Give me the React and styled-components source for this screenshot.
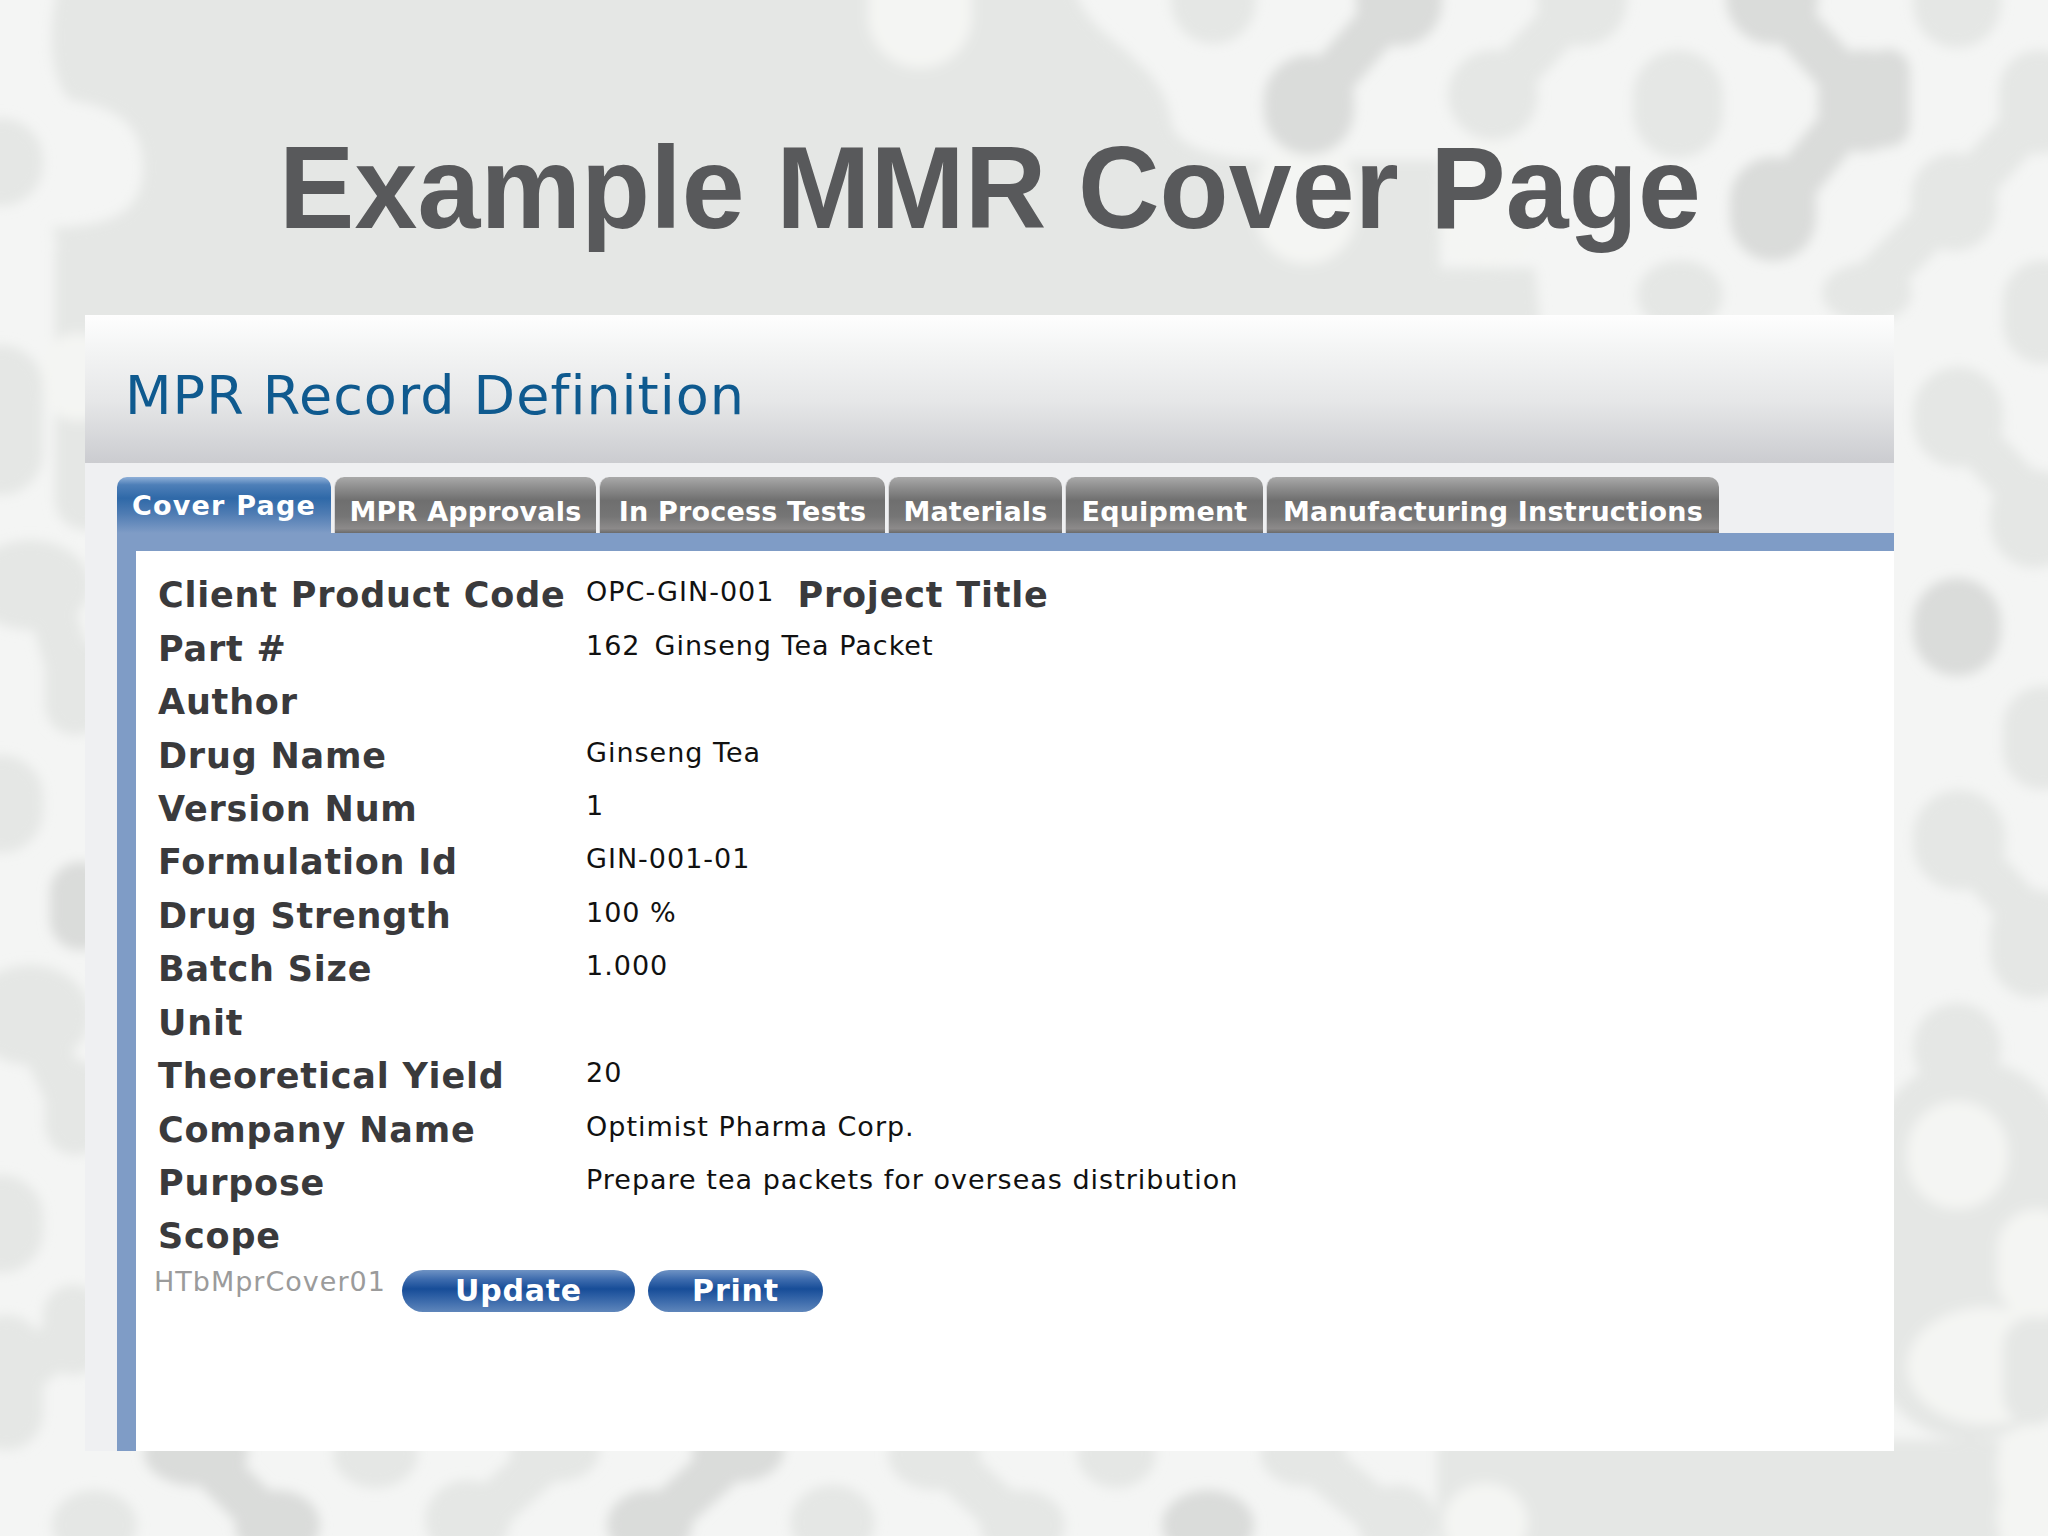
import React from 'react';
import styled, { createGlobalStyle } from 'styled-components';

const Global = createGlobalStyle`
  html, body { margin: 0; padding: 0; background: #f4f5f4; }
`;

const Page = styled.div`
  position: relative;
  width: 2048px;
  height: 1536px;
  overflow: hidden;
  background: #f4f5f4;
`;
const Backdrop = styled.svg`
  position: absolute;
  inset: 0;
  width: 2048px;
  height: 1536px;
`;
const Slide = styled.div`
  position: relative;
  display: flex;
  flex-direction: column;
  width: 1809px;
  height: 1451px;
  margin-left: 85px;
`;
const TitleBar = styled.div`
  height: 315px;
  flex: none;
  box-sizing: border-box;
  padding: 131px 0 0 194px;
`;
const Title = styled.h1`
  margin: 0;
  font: bold 113px/1 'Liberation Sans', Arial, sans-serif;
  letter-spacing: 0.12px;
  color: #58595b;
  white-space: nowrap;
  transform: scaleY(1.04);
`;
const Panel = styled.div`
  flex: 1;
  display: flex;
  flex-direction: column;
  background: #eff0f2;
`;
const PanelHeader = styled.div`
  height: 148px;
  flex: none;
  box-sizing: border-box;
  padding: 49px 0 0 40px;
  background: linear-gradient(#fefefe 0%, #f4f5f5 22%, #e6e7e8 58%, #cbccd0 100%);
`;
const PanelTitle = styled.h2`
  margin: 0;
  font: 400 54px/1.2 'DejaVu Sans', Verdana, sans-serif;
  letter-spacing: 1px;
  color: #0f5a8f;
  white-space: nowrap;
`;
const TabArea = styled.div`
  flex: 1;
  display: flex;
  flex-direction: column;
  padding: 14px 0 0 32px;
  min-height: 0;
`;
const TabRow = styled.div`
  display: flex;
  gap: 3px;
  height: 56px;
  flex: none;
`;
const Tab = styled.div`
  box-sizing: border-box;
  width: ${p => p.$w}px;
  border-radius: 10px 10px 0 0;
  border-left: ${p => (p.$active ? 'none' : '1px solid #d6d6d8')};
  color: #fff;
  font: bold 27px/1 'DejaVu Sans', Verdana, sans-serif;
  letter-spacing: ${p => (p.$active ? 1.2 : 0.2)}px;
  text-align: center;
  white-space: nowrap;
  padding-top: ${p => (p.$active ? 15 : 21)}px;
  background: ${p =>
    p.$active
      ? 'linear-gradient(#8fb0d8 0%, #4e7fb8 14%, #2f69a8 38%, #4f7cb3 66%, #7f9cc6 100%)'
      : 'linear-gradient(#a9a9a9 0%, #8f8f8f 18%, #6f6f6f 42%, #757575 70%, #8c8a8a 92%, #6b6b6b 100%)'};
`;
const TabBody = styled.div`
  flex: 1;
  border-left: 19px solid #7f9cc6;
  border-top: 18px solid #7f9cc6;
  background: #fff;
  padding: 18px 0 0 22px;
`;
const Row = styled.div`
  display: flex;
  align-items: center;
  height: 53.45px;
  color: #111;
`;
const Label = styled.span`
  flex: none;
  width: 428px;
  font: bold 35px/1 'DejaVu Sans', Verdana, sans-serif;
  letter-spacing: 0.8px;
  color: #3a3a3c;
  white-space: nowrap;
`;
const Value = styled.span`
  font: 400 27px/1 'DejaVu Sans', Verdana, sans-serif;
  letter-spacing: 1px;
  color: #111;
  white-space: nowrap;
  margin-top: -8px;
  margin-left: ${p => p.$gap || 0}px;
`;
const InlineLabel = styled(Label)`
  width: auto;
  margin-left: 23px;
`;
const Actions = styled.div`
  display: flex;
  align-items: center;
  gap: 13px;
  margin: 2px 0 0 -4px;
  height: 50px;
`;
const TableId = styled.span`
  font: 400 27px/1 'DejaVu Sans', Verdana, sans-serif;
  letter-spacing: 1px;
  color: #9b9b9b;
  margin-top: -18px;
  width: 235px;
  flex: none;
  white-space: nowrap;
`;
const Button = styled.div`
  box-sizing: border-box;
  width: ${p => p.$w}px;
  height: 42px;
  border-radius: 21px;
  color: #fff;
  font: bold 30px/42px 'DejaVu Sans', Verdana, sans-serif;
  letter-spacing: 0.8px;
  text-align: center;
  background: linear-gradient(#6f93c4 0%, #3e6cae 22%, #174d98 45%, #2c5ea4 62%, #5f86bb 100%);
`;

const M = '#e5e7e5';
const D = '#dadcda';
const L = '#f4f5f3';

// x, y, width, height, tone: the soft blobs of the slide's wallpaper, painted in order
const blobs = [
  [868, -60, 104, 128, L], [1256, 140, 100, 124, L], [1440, 140, 94, 128, L],
  [1171, -50, 85, 94, M], [1356, -50, 86, 96, D], [1264, 55, 90, 100, D],
  [1537, -50, 90, 96, M], [1448, 50, 90, 90, M], [1633, 50, 90, 108, M],
  [1726, -50, 92, 94, D], [1818, 50, 90, 102, D], [1730, 157, 86, 104, D],
  [1911, 153, 86, 98, M], [1822, 263, 90, 60, M], [1637, 260, 86, 70, M],
  [1999, 50, 80, 104, M], [1913, -50, 88, 98, M],
  [1866, 49, 44, 98, D], [2003, 260, 80, 104, M], [1913, 367, 90, 100, M],
  [1990, 470, 90, 98, M], [1913, 578, 88, 98, D], [2003, 686, 80, 104, M],
  [1913, 790, 92, 100, M], [1990, 890, 90, 108, M], [1913, 1003, 88, 90, M],
  [1870, 1060, 200, 380, M], [1907, 1101, 101, 108, L], [1997, 1209, 80, 110, L],
  [1907, 1307, 160, 118, L], [2003, 1317, 60, 108, M], [1997, 1425, 70, 130, L],
  [1860, 1440, 140, 110, M],
  [-40, 118, 83, 88, M], [55, 225, 60, 305, M], [43, 333, 70, 88, L],
  [-40, 345, 83, 150, M], [-30, 540, 120, 90, M], [45, 640, 60, 95, M],
  [-40, 755, 83, 98, M], [50, 862, 60, 88, D], [-30, 965, 120, 100, M],
  [45, 1060, 60, 95, M], [-40, 1175, 83, 98, M], [43, 1285, 60, 90, M],
  [-30, 1315, 73, 135, M],
  [144, 1420, 104, 66, D], [235, 1490, 85, 70, D], [333, 1420, 85, 68, M],
  [52, 1490, 85, 70, M], [510, 1420, 90, 62, M], [425, 1480, 85, 80, M],
  [607, 1490, 85, 70, D], [692, 1420, 92, 62, D], [790, 1485, 85, 75, M],
  [888, 1420, 92, 70, M], [980, 1490, 85, 70, M], [1077, 1420, 79, 68, M],
  [1162, 1490, 92, 70, D], [1260, 1420, 85, 66, M], [1358, 1485, 79, 75, M],
  [1443, 1483, 85, 80, L],
];

// necks that join neighbouring blobs: x1, y1, x2, y2, tone
const necks = [
  [1399, 0, 1308, 105, D], [1772, 0, 1862, 100, D], [1862, 100, 1773, 210, D],
  [1582, 0, 1493, 95, M], [1954, 200, 1867, 290, M], [2048, 100, 1957, 200, M],
  [1957, 421, 2048, 520, M], [1957, 840, 2048, 940, M],
  [196, 1450, 277, 1530, D], [555, 1450, 467, 1530, M], [738, 1450, 650, 1530, D],
  [934, 1450, 1022, 1530, M], [1302, 1450, 1398, 1530, M],
  [45, 585, 75, 690, M], [30, 1015, 75, 1110, M], [75, 1330, 0, 1390, M],
];

const Wallpaper = () => (
  <Backdrop viewBox="0 0 2048 1536">
    <defs>
      <filter id="soft" x="-5%" y="-5%" width="110%" height="110%">
        <feGaussianBlur stdDeviation="6" />
      </filter>
    </defs>
    <g filter="url(#soft)">
      <path
        fill={M}
        d="M60 -20 L1071 -20 C1085 30 1120 40 1135 60 C1165 85 1170 110 1172 125 C1180 150 1220 157 1256 160 L1440 160 L1440 268 L1535 268 L1541 330 L85 330 L52 228 C110 225 143 215 143 166 C143 115 100 105 70 100 C50 80 46 30 60 -20 Z"
      />
      <path fill={M} d="M1437 1440 L2000 1440 L2000 1560 L1437 1560 Z" />
      {blobs.map(([x, y, w, h, c]) => (
        <rect key={`${x}-${y}`} x={x} y={y} width={w} height={h} rx={w / 2} ry={Math.min(h / 2, w / 2)} fill={c} />
      ))}
      {necks.map(([x1, y1, x2, y2, c]) => (
        <line key={`${x1}-${y1}-${x2}`} x1={x1} y1={y1} x2={x2} y2={y2} stroke={c} strokeWidth="46" strokeLinecap="round" />
      ))}
    </g>
  </Backdrop>
);

const tabs = [
  ['Cover Page', 214, true],
  ['MPR Approvals', 262],
  ['In Process Tests', 286],
  ['Materials', 174],
  ['Equipment', 198],
  ['Manufacturing Instructions', 453],
];

const rows = [
  ['Client Product Code', 'OPC-GIN-001', 'Project Title'],
  ['Part #', '162', null, 'Ginseng Tea Packet'],
  ['Author'],
  ['Drug Name', 'Ginseng Tea'],
  ['Version Num', '1'],
  ['Formulation Id', 'GIN-001-01'],
  ['Drug Strength', '100 %'],
  ['Batch Size', '1.000'],
  ['Unit'],
  ['Theoretical Yield', '20'],
  ['Company Name', 'Optimist Pharma Corp.'],
  ['Purpose', 'Prepare tea packets for overseas distribution'],
  ['Scope'],
];

export default function App() {
  return (
    <Page>
      <Global />
      <Wallpaper />
      <Slide>
        <TitleBar>
          <Title>Example MMR Cover Page</Title>
        </TitleBar>
        <Panel>
          <PanelHeader>
            <PanelTitle>MPR Record Definition</PanelTitle>
          </PanelHeader>
          <TabArea>
            <TabRow>
              {tabs.map(([t, w, a]) => (
                <Tab key={t} $w={w} $active={a}>{t}</Tab>
              ))}
            </TabRow>
            <TabBody>
              {rows.map(([l, v, inline, extra]) => (
                <Row key={l}>
                  <Label>{l}</Label>
                  {v && <Value>{v}</Value>}
                  {inline && <InlineLabel>{inline}</InlineLabel>}
                  {extra && <Value $gap={14}>{extra}</Value>}
                </Row>
              ))}
              <Actions>
                <TableId>HTbMprCover01</TableId>
                <Button $w={233}>Update</Button>
                <Button $w={175}>Print</Button>
              </Actions>
            </TabBody>
          </TabArea>
        </Panel>
      </Slide>
    </Page>
  );
}
